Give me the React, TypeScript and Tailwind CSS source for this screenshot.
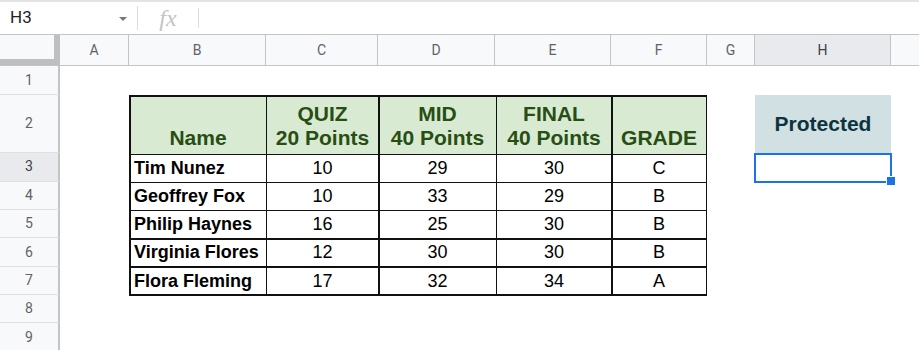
import React from "react";

const cols = ["A", "B", "C", "D", "E", "F", "G", "H", ""];
const colW = [69, 137, 112, 117, 116, 96, 48, 136, 40];

const rows = [
  { name: "Tim Nunez", q: 10, m: 29, f: 30, g: "C" },
  { name: "Geoffrey Fox", q: 10, m: 33, f: 29, g: "B" },
  { name: "Philip Haynes", q: 16, m: 25, f: 30, g: "B" },
  { name: "Virginia Flores", q: 12, m: 30, f: 30, g: "B" },
  { name: "Flora Fleming", q: 17, m: 32, f: 34, g: "A" },
];

export default function App() {
  return (
    <div className="w-[919px] h-[350px] overflow-hidden bg-white relative" style={{ fontFamily: '"Liberation Sans", Arial, sans-serif' }}>
      {/* formula bar */}
      <div className="h-[34px] border-t-2 border-[#e3e3e3] flex items-center">
        <div className="w-[137px] h-full flex items-center pl-[10px] pr-[10px] justify-between">
          <span className="text-[17px] text-[#202124]" style={{ fontFamily: "Roboto, sans-serif" }}>H3</span>
          <span className="w-0 h-0 border-l-[4px] border-r-[4px] border-t-[4px] border-l-transparent border-r-transparent border-t-[#777] mt-[1px]" />
        </div>
        <div className="w-px h-[24px] bg-[#dadce0]" />
        <div className="w-[60px] flex items-center justify-center">
          <span className="text-[24px] italic text-[#c4c4c4] leading-none" style={{ fontFamily: '"Liberation Serif", "DejaVu Serif", serif' }}>fx</span>
        </div>
        <div className="w-px h-[20px] bg-[#dadce0]" />
      </div>

      {/* column headers */}
      <div className="flex h-[32px] border-t border-b border-[#c4c4c4] bg-[#f8f9fa]" style={{ fontFamily: "Roboto, sans-serif" }}>
        <div className="w-[60px] h-full relative shrink-0">
          <div className="absolute right-0 top-0 bottom-0 w-[6px] bg-[#bfbfbf]" />
          <div className="absolute left-0 right-0 bottom-0 h-[6px] bg-[#bfbfbf]" />
        </div>
        {cols.map((c, i) => (
          <div
            key={i}
            className={`h-full flex items-center justify-center text-[14px] border-r border-[#c4c4c4] shrink-0 ${c === "H" ? "bg-[#e8eaed] text-[#3c4043]" : "text-[#5f6368]"}`}
            style={{ width: colW[i] }}
          >
            {c}
          </div>
        ))}
      </div>

      {/* body grid */}
      <div className="grid grid-cols-[60px_69px_137px_112px_117px_116px_96px_48px_136px_1fr] grid-rows-[29px_58.3px_repeat(7,28.35px)]">
        {Array.from({ length: 9 }).map((_, i) => (
          <div
            key={i}
            className={`col-start-1 flex items-center justify-center text-[14px] border-r-2 border-b border-r-[#c4c4c4] border-b-[#e0e0e0] ${i === 2 ? "bg-[#e8eaed] text-[#3c4043]" : "bg-[#f8f9fa] text-[#5f6368]"}`}
            style={{ gridRow: i + 1, fontFamily: "Roboto, sans-serif" }}
          >
            {i + 1}
          </div>
        ))}

        {/* table */}
        <div className="col-start-3 col-span-5 row-start-2 row-span-6 self-start">
          <div className="grid grid-cols-[135px_111px_116px_114px_93px] grid-rows-[57px_repeat(5,26.7px)] gap-[1.5px] p-[1.5px] bg-[#111]">
            <div className="bg-[#d9ead3] text-[#274e13] font-bold text-[21px] leading-[24px] flex items-end justify-center pb-[4px]">Name</div>
            <div className="bg-[#d9ead3] text-[#274e13] font-bold text-[21px] leading-[24px] flex flex-col items-center justify-end pb-[4px]"><span>QUIZ</span><span>20 Points</span></div>
            <div className="bg-[#d9ead3] text-[#274e13] font-bold text-[21px] leading-[24px] flex flex-col items-center justify-end pb-[4px]"><span>MID</span><span>40 Points</span></div>
            <div className="bg-[#d9ead3] text-[#274e13] font-bold text-[21px] leading-[24px] flex flex-col items-center justify-end pb-[4px]"><span>FINAL</span><span>40 Points</span></div>
            <div className="bg-[#d9ead3] text-[#274e13] font-bold text-[21px] leading-[24px] flex items-end justify-center pb-[4px]">GRADE</div>
            {rows.map((r) => (
              <React.Fragment key={r.name}>
                <div className="bg-white text-black font-bold text-[18px] flex items-center pl-[3.5px] whitespace-nowrap">{r.name}</div>
                <div className="bg-white text-black text-[18px] flex items-center justify-center">{r.q}</div>
                <div className="bg-white text-black text-[18px] flex items-center justify-center">{r.m}</div>
                <div className="bg-white text-black text-[18px] flex items-center justify-center">{r.f}</div>
                <div className="bg-white text-black text-[18px] flex items-center justify-center">{r.g}</div>
              </React.Fragment>
            ))}
          </div>
        </div>

        {/* Protected */}
        <div className="col-start-9 row-start-2 bg-[#d0e0e3] text-[#0c343d] font-bold text-[21px] flex items-center justify-center">Protected</div>
        {/* selected H3 */}
        <div className="col-start-9 row-start-3 relative">
          <div className="absolute left-[-1px] right-[-1px] top-0 bottom-[-1px] border-[2.5px] border-[#1a73e8]" />
          <div className="absolute right-[-5px] bottom-[-4px] w-[8px] h-[8px] bg-[#1a73e8] border border-white box-content" />
        </div>
      </div>
    </div>
  );
}
